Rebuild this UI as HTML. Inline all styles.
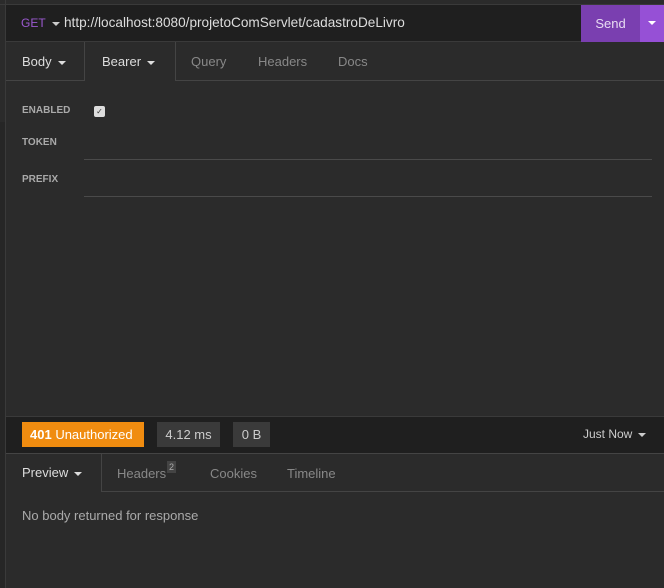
<!DOCTYPE html>
<html><head><style>
*{box-sizing:border-box;margin:0;padding:0}
body{width:664px;height:588px;background:#2b2b2b;font-family:"Liberation Sans",sans-serif;font-size:13px;color:#ccc;position:relative;overflow:hidden}
.abs{position:absolute}
.caret{display:inline-block;width:0;height:0;border-left:4px solid transparent;border-right:4px solid transparent;border-top:4px solid #ddd;vertical-align:middle;margin-left:6px}
</style></head><body>
<div class="abs" style="left:0;top:0;width:664px;height:5px;background:#2b2b2b;border-bottom:1px solid #3a3a3a"></div>
<div class="abs" style="left:5px;top:0;width:1px;height:588px;background:#3a3a3a"></div>
<div class="abs" style="left:0;top:122px;width:5px;height:466px;background:#262626"></div>
<div class="abs" style="left:6px;top:5px;width:658px;height:37px;background:#1f1f1f;border-bottom:1px solid #3a3a3a"></div>
<div class="abs" style="left:21px;top:16px;color:#9b59d0;font-size:12px">GET<span class="caret" style="border-top-color:#ccc"></span></div>
<div class="abs" style="left:64px;top:15px;color:#ddd;font-size:13.6px">http://localhost:8080/projetoComServlet/cadastroDeLivro</div>
<div class="abs" style="left:581px;top:5px;width:59px;height:37px;background:#7a3fb0;color:#e8dcf2;font-size:13px;text-align:center;line-height:37px">Send</div>
<div class="abs" style="left:640px;top:5px;width:24px;height:37px;background:#9650d6"><span class="caret" style="border-top-color:#fff;margin:16px 0 0 8px"></span></div>
<div class="abs" style="left:6px;top:42px;width:658px;height:39px;border-bottom:1px solid #444"></div>
<div class="abs" style="left:22px;top:54px;color:#ddd">Body<span class="caret"></span></div>
<div class="abs" style="left:84px;top:42px;width:92px;height:39px;background:#2b2b2b;border-left:1px solid #444;border-right:1px solid #444"></div>
<div class="abs" style="left:102px;top:54px;color:#ddd">Bearer<span class="caret"></span></div>
<div class="abs" style="left:191px;top:54px;color:#888">Query</div>
<div class="abs" style="left:258px;top:54px;color:#888">Headers</div>
<div class="abs" style="left:338px;top:54px;color:#888">Docs</div>
<div class="abs" style="left:22px;top:105px;font-size:10px;font-weight:bold;color:#aaa">ENABLED</div>
<div class="abs" style="left:94px;top:106px;width:11px;height:11px;background:#ddd;border-radius:2px;color:#333;font-size:8px;line-height:11px;text-align:center">✓</div>
<div class="abs" style="left:22px;top:137px;font-size:10px;font-weight:bold;color:#aaa">TOKEN</div>
<div class="abs" style="left:84px;top:159px;width:568px;height:1px;background:#4a4a4a"></div>
<div class="abs" style="left:22px;top:174px;font-size:10px;font-weight:bold;color:#aaa">PREFIX</div>
<div class="abs" style="left:84px;top:196px;width:568px;height:1px;background:#4a4a4a"></div>
<div class="abs" style="left:6px;top:416px;width:658px;height:38px;background:#1f1f1f;border-top:1px solid #3a3a3a;border-bottom:1px solid #444"></div>
<div class="abs" style="left:22px;top:422px;width:122px;height:25px;background:#f08c10;color:#fff;line-height:25px;padding-left:8px"><b>401</b> Unauthorized</div>
<div class="abs" style="left:157px;top:422px;width:63px;height:25px;background:#3a3a3a;color:#ccc;line-height:25px;text-align:center">4.12 ms</div>
<div class="abs" style="left:233px;top:422px;width:37px;height:25px;background:#3a3a3a;color:#ccc;line-height:25px;text-align:center">0 B</div>
<div class="abs" style="left:583px;top:427px;color:#ccc;font-size:12px">Just Now<span class="caret" style="border-top-color:#ccc"></span></div>
<div class="abs" style="left:101px;top:454px;width:563px;height:38px;border-left:1px solid #444;border-bottom:1px solid #444"></div>
<div class="abs" style="left:22px;top:465px;color:#ddd">Preview<span class="caret"></span></div>
<div class="abs" style="left:117px;top:466px;color:#888">Headers</div>
<div class="abs" style="left:167px;top:461px;background:#444;color:#aaa;font-size:9px;padding:0 2px;line-height:12px">2</div>
<div class="abs" style="left:210px;top:466px;color:#888">Cookies</div>
<div class="abs" style="left:287px;top:466px;color:#888">Timeline</div>
<div class="abs" style="left:22px;top:508px;color:#aaa">No body returned for response</div>
</body></html>
